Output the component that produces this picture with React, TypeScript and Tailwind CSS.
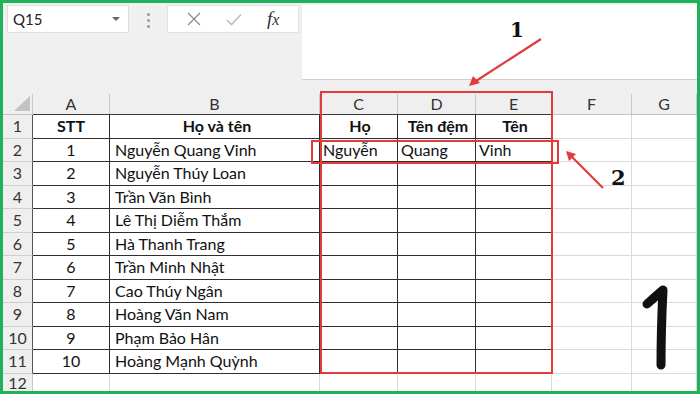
import React from "react";

// Excel sheet screenshot with red annotations

const COLS = ["w-[30px]", "w-[77px]", "w-[210px]", "w-[78px]", "w-[78px]", "w-[76px]", "w-[80px]", "w-[65px]"];
const LETTERS = ["", "A", "B", "C", "D", "E", "F", "G"];

const PEOPLE = [
  "Nguyễn Quang Vinh",
  "Nguyễn Thúy Loan",
  "Trần Văn Bình",
  "Lê Thị Diễm Thắm",
  "Hà Thanh Trang",
  "Trần Minh Nhật",
  "Cao Thúy Ngân",
  "Hoàng Văn Nam",
  "Phạm Bảo Hân",
  "Hoàng Mạnh Quỳnh",
];

function cellText(row: number, col: number): string {
  if (row === 1) return ["", "STT", "Họ và tên", "Họ", "Tên đệm", "Tên", "", ""][col];
  if (row >= 2 && row <= 11) {
    if (col === 1) return String(row - 1);
    if (col === 2) return PEOPLE[row - 2];
  }
  if (row === 2) return ["", "", "", "Nguyễn", "Quang", "Vinh", "", ""][col];
  return "";
}

function Toolbar() {
  return (
    <div className="flex h-[85px] items-start bg-[#f0f0f0]">
      {/* Name box */}
      <div className="ml-[4px] mt-[2px] flex h-[28px] w-[122px] items-center justify-between border border-[#dedede] bg-white pl-[5px] pr-[8px] text-[15px] text-[#222]">
        <span>Q15</span>
        <span className="h-0 w-0 border-x-[4px] border-t-[4px] border-x-transparent border-t-[#666]" />
      </div>
      {/* dots */}
      <div className="flex h-[34px] w-[38px] flex-col items-center justify-center gap-[3px]">
        <span className="h-[3px] w-[3px] rounded-full bg-[#999]" />
        <span className="h-[3px] w-[3px] rounded-full bg-[#999]" />
        <span className="h-[3px] w-[3px] rounded-full bg-[#999]" />
      </div>
      {/* formula buttons */}
      <div className="mt-[2px] flex h-[28px] w-[132px] items-center justify-around border border-[#e2e2e2] bg-white px-[6px]">
        <svg width="14" height="14" viewBox="0 0 14 14">
          <path d="M1 1 L13 13 M13 1 L1 13" stroke="#8a8a8a" strokeWidth="1.2" fill="none" />
        </svg>
        <svg width="16" height="13" viewBox="0 0 16 13">
          <path d="M1 7 L5.5 11.5 L15 1.5" stroke="#bdbdbd" strokeWidth="1.6" fill="none" />
        </svg>
        <span className="font-['Liberation_Serif',serif] text-[19px] italic text-[#333]">
          f<span className="text-[16px]">x</span>
        </span>
      </div>
      {/* formula input */}
      <div className="ml-[3px] mt-[2px] h-[75px] flex-1 border-b border-[#d0d0d0] bg-white" />
    </div>
  );
}

function HeaderRow() {
  return (
    <div className="flex h-[27px] bg-[#efefef]">
      {COLS.map((w, c) => {
        const dark = c >= 1 && c <= 5;
        return (
          <div key={c} className={`${w} flex h-full items-end border-b ${dark ? "border-[#3a3a3a]" : "border-[#c4c4c4]"}`}>
            <div className="flex h-[20px] w-full items-center justify-center border-r border-[#c9c9c9] text-[16px] text-[#333]">
              {c === 0 ? (
                <span className="mb-[1px] ml-[8px] h-0 w-0 border-b-[15px] border-l-[16px] border-b-[#c3c3c3] border-l-transparent" />
              ) : (
                LETTERS[c]
              )}
            </div>
          </div>
        );
      })}
    </div>
  );
}

function SheetRow({ row }: { row: number }) {
  const inTable = row <= 11;
  return (
    <div className={`flex ${row === 12 ? "h-[20px]" : "h-[23.5px]"}`}>
      {COLS.map((w, c) => {
        const text = cellText(row, c);
        if (c === 0) {
          return (
            <div
              key={c}
              className={`${w} flex items-center justify-center border-b border-r border-b-[#cfcfcf] bg-[#efefef] text-[16px] text-[#333] ${inTable ? "border-r-[#555]" : "border-r-[#c9c9c9]"}`}
            >
              {row}
            </div>
          );
        }
        const dark = inTable && c <= 5;
        const align = row === 1 || c === 1 ? "justify-center" : "justify-start";
        const pad = c === 2 ? "pl-[5px]" : c >= 3 ? "pl-[3px]" : "";
        return (
          <div
            key={c}
            className={`${w} flex items-center overflow-hidden whitespace-nowrap border-b border-r text-[16px] text-[#111] ${align} ${pad} ${row === 1 ? "font-bold" : ""} ${dark ? "border-[#2e2e2e]" : "border-[#dadada]"}`}
          >
            {text}
          </div>
        );
      })}
    </div>
  );
}

export default function App() {
  return (
    <div className="relative h-[394px] w-[700px] overflow-hidden border-[3px] border-[#1fb25a] bg-white font-['Lato',sans-serif]">
      <Toolbar />
      <HeaderRow />
      {Array.from({ length: 12 }, (_, i) => (
        <SheetRow key={i} row={i + 1} />
      ))}

      {/* red highlight boxes */}
      <div className="absolute left-[317px] top-[88px] h-[283px] w-[233px] border-2 border-[#e23b3b]" />
      <div className="absolute left-[308px] top-[137px] h-[24px] w-[248px] border-2 border-[#e23b3b]" />

      {/* labels */}
      <span className="absolute left-[507px] top-[17px] font-['DejaVu_Serif',serif] text-[20px] font-bold leading-none text-[#111]">1</span>
      <span className="absolute left-[608px] top-[164px] font-['DejaVu_Serif',serif] text-[21px] font-bold leading-none text-[#111]">2</span>

      {/* arrows and hand-drawn 1 */}
      <svg className="pointer-events-none absolute left-[-3px] top-[-3px]" width="700" height="394" viewBox="0 0 700 394">
        <line x1="541" y1="39" x2="476" y2="81" stroke="#e23b3b" strokeWidth="2.2" />
        <polygon points="469,86 473,76 480,83" fill="#e23b3b" />
        <line x1="603" y1="188" x2="572" y2="157" stroke="#e23b3b" strokeWidth="2.2" />
        <polygon points="566,151 576,154 569,161" fill="#e23b3b" />
        <path d="M647 304 Q656 296 663 290 Q661 330 661 365" stroke="#111" strokeWidth="9" fill="none" strokeLinecap="round" strokeLinejoin="round" />
      </svg>
    </div>
  );
}
